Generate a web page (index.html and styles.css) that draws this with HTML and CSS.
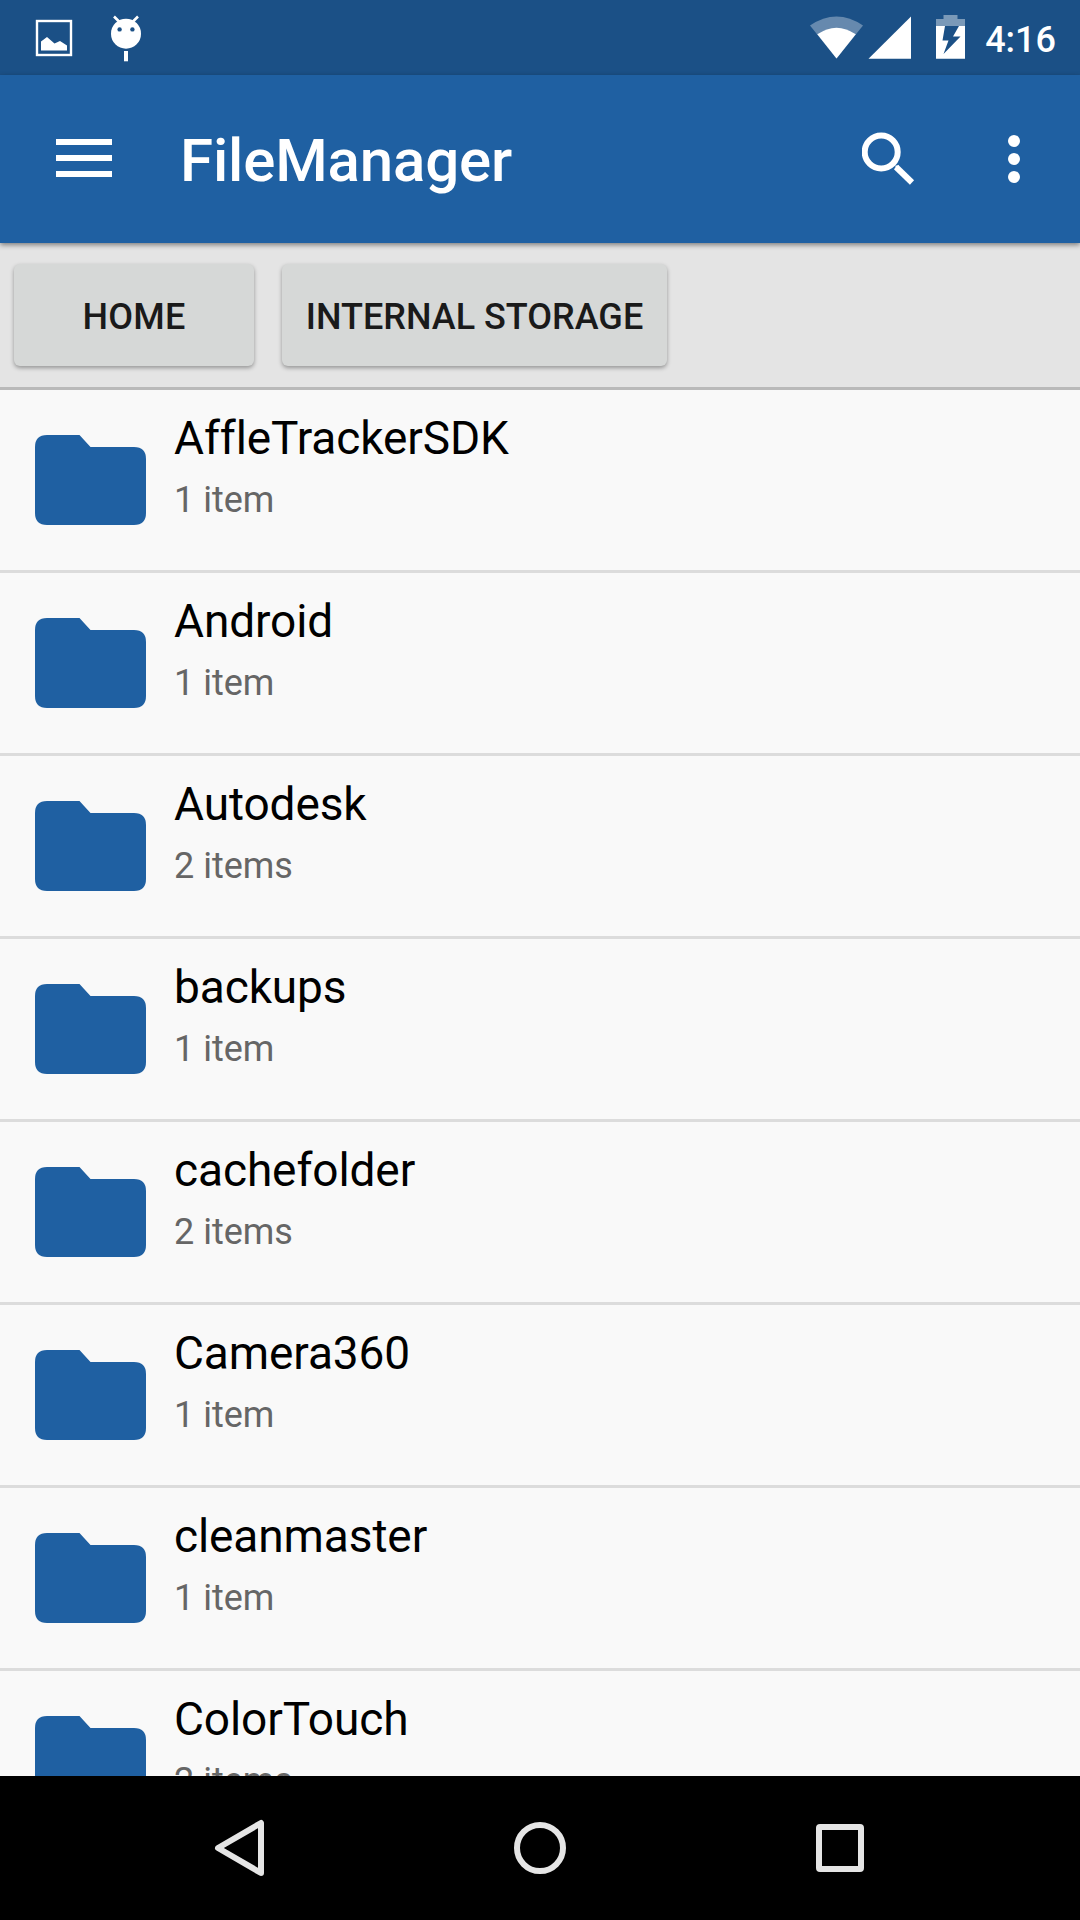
FILE: index.html
```html
<!DOCTYPE html>
<html lang="en">
<head>
    <meta charset="UTF-8">
    <meta name="viewport" content="width=device-width, initial-scale=1.0">
    <title>FileManager</title>
    <link rel="stylesheet" href="styles.css">
</head>
<body>
    <!-- Folder icon shared by the list rows -->
    <svg class="defs" width="0" height="0">
        <symbol id="folder" viewBox="0 0 111 90">
            <path d="M12 0H44.500L55.500 12H99Q111 12 111 24V78Q111 90 99 90H12Q0 90 0 78V12Q0 0 12 0Z"/>
        </symbol>
    </svg>

    <div class="screen">
        <!-- Status bar -->
        <div class="status-bar">
            <svg class="status-left" width="120" height="75" viewBox="30 0 120 75" fill="#fff">
                <rect x="37" y="21" width="34" height="34" fill="none" stroke="#fff" stroke-width="2.4"/>
                <path d="M41 41.5L47 37L54.5 43.5L60 41L67 45.5V50.5H41Z"/>
                <circle cx="126" cy="33.7" r="15"/>
                <path d="M114 16.5L120 22.5M138 16.5L132 22.5" stroke="#fff" stroke-width="2.6"/>
                <circle cx="119.6" cy="29.4" r="2.2" fill="#1b5086"/>
                <circle cx="132.4" cy="29.4" r="2.2" fill="#1b5086"/>
                <rect x="124" y="51" width="4" height="10.3"/>
            </svg>
            <div class="status-right">
                <svg width="160" height="75" viewBox="808 0 160 75" fill="#fff">
                    <path d="M810 25.5Q836.500 7.500 863 25.500L836.500 58.500Z" opacity=".33"/>
                    <path d="M817.300 34.300Q836.500 21 855.800 34.300L836.500 58.500Z"/>
                    <path d="M868.500 58.700L911 16.500V58.700Z"/>
                    <path d="M936 26V19H943.500V15H957.500V19H965V26Z" opacity=".42"/>
                    <path fill-rule="evenodd" d="M936 26H965V58.700H936ZM945 26L942.500 40.500H948.500L943.500 54L960.500 36.500H953L959 26Z"/>
                </svg>
                <span class="clock">4:16</span>
            </div>
        </div>

        <!-- Toolbar -->
        <header class="toolbar">
            <svg class="menu-icon" width="56" height="38" viewBox="0 0 56 38" fill="#fff">
                <path d="M0 0H56V6H0ZM0 16H56V22H0ZM0 32H56V38H0Z"/>
            </svg>
            <h1>FileManager</h1>
            <svg class="search-icon" width="54" height="54" viewBox="0 0 54 54" fill="none" stroke="#fff" stroke-width="6">
                <circle cx="19.200" cy="20" r="16.500"/>
                <path d="M34 35L50 50.500"/>
                <path d="M33.500 33.500H37V38L33.500 36Z" fill="#fff" stroke="none"/>
            </svg>
            <svg class="more-icon" width="12" height="48" viewBox="0 0 12 48" fill="#fff">
                <circle cx="6" cy="6" r="6"/>
                <circle cx="6" cy="24" r="6"/>
                <circle cx="6" cy="42" r="6"/>
            </svg>
        </header>

        <!-- Path buttons -->
        <div class="breadcrumb">
            <button class="crumb home">HOME</button>
            <button class="crumb storage">INTERNAL STORAGE</button>
        </div>

        <!-- Folder list -->
        <ul class="file-list">
            <li class="file">
                <svg class="folder"><use href="#folder"/></svg>
                <div><div class="name">AffleTrackerSDK</div><div class="count">1 item</div></div>
            </li>
            <li class="file">
                <svg class="folder"><use href="#folder"/></svg>
                <div><div class="name">Android</div><div class="count">1 item</div></div>
            </li>
            <li class="file">
                <svg class="folder"><use href="#folder"/></svg>
                <div><div class="name">Autodesk</div><div class="count">2 items</div></div>
            </li>
            <li class="file">
                <svg class="folder"><use href="#folder"/></svg>
                <div><div class="name">backups</div><div class="count">1 item</div></div>
            </li>
            <li class="file">
                <svg class="folder"><use href="#folder"/></svg>
                <div><div class="name">cachefolder</div><div class="count">2 items</div></div>
            </li>
            <li class="file">
                <svg class="folder"><use href="#folder"/></svg>
                <div><div class="name">Camera360</div><div class="count">1 item</div></div>
            </li>
            <li class="file">
                <svg class="folder"><use href="#folder"/></svg>
                <div><div class="name">cleanmaster</div><div class="count">1 item</div></div>
            </li>
            <li class="file">
                <svg class="folder"><use href="#folder"/></svg>
                <div><div class="name">ColorTouch</div><div class="count">2 items</div></div>
            </li>
        </ul>

        <!-- Navigation bar -->
        <nav class="nav-bar">
            <svg width="60" height="60" viewBox="0 0 60 60"><path d="M51 5V55L8 30Z"/></svg>
            <svg width="60" height="60" viewBox="0 0 60 60"><circle cx="30" cy="30" r="23"/></svg>
            <svg width="60" height="60" viewBox="0 0 60 60"><rect x="9" y="9" width="42" height="42" rx="1"/></svg>
        </nav>
    </div>
</body>
</html>
```
FILE: styles.css
```css
body {
    margin: 0;
    font-family: Roboto, sans-serif;
    background-color: #f9f9f9;
}

.defs {
    display: block;
}

.screen {
    display: flex;
    flex-direction: column;
    width: 1080px;
    height: 1920px;
    overflow: hidden;
}

.status-bar {
    display: flex;
    justify-content: space-between;
    flex: none;
    height: 75px;
    padding: 0 24px 0 30px;
    background-color: #1b5086;
}

.status-right {
    display: flex;
    gap: 17px;
}

.clock {
    color: #fff;
    font-size: 36px;
    font-weight: 500;
    line-height: 81px;
}

.toolbar {
    display: flex;
    align-items: center;
    flex: none;
    box-sizing: border-box;
    height: 168px;
    padding: 0 60px 0 56px;
    background-color: #1f60a2;
    box-shadow: 0 2px 5px rgba(0, 0, 0, 0.45);
    z-index: 1;
}

.menu-icon {
    margin-bottom: 2px;
}

.toolbar h1 {
    flex: 1;
    margin: 0;
    padding: 4px 0 0 68px;
    color: #fff;
    font-size: 60px;
    font-weight: 500;
    line-height: 72px;
    letter-spacing: -0.15px;
}

.search-icon {
    margin-right: 92px;
}

.breadcrumb {
    display: flex;
    gap: 28px;
    flex: none;
    box-sizing: border-box;
    height: 147px;
    padding: 21px 14px 0;
    background-color: #e4e4e4;
    border-bottom: 3px solid #b9b9b9;
}

.crumb {
    height: 102px;
    padding: 4px 0 0;
    border: none;
    border-radius: 6px;
    background-color: #d6d8d7;
    color: #1a1a1a;
    font-family: inherit;
    font-size: 36px;
    font-weight: 500;
    box-shadow: 0 2px 4px rgba(0, 0, 0, 0.35);
}

.home {
    width: 240px;
    letter-spacing: 0.2px;
}

.storage {
    width: 385px;
}

.file-list {
    flex: 1;
    min-height: 0;
    margin: 0;
    padding: 0;
    overflow: hidden;
    list-style: none;
}

.file {
    display: flex;
    gap: 28px;
    box-sizing: border-box;
    height: 183px;
    padding: 20px 0 0 35px;
    border-bottom: 3px solid #dcdcdc;
}

.folder {
    width: 111px;
    height: 90px;
    margin-top: 25px;
    fill: #1f60a2;
}

.name {
    color: #000;
    font-size: 46px;
    line-height: 56px;
    letter-spacing: -0.1px;
    font-variant-ligatures: none;
}

.count {
    margin-top: 13px;
    color: #666;
    font-size: 36px;
    line-height: 42px;
}

.nav-bar {
    display: flex;
    justify-content: center;
    align-items: center;
    gap: 240px;
    flex: none;
    height: 144px;
    background-color: #000;
}

.nav-bar svg {
    fill: none;
    stroke: #e5e5e5;
    stroke-width: 6;
    stroke-linejoin: round;
}
```
